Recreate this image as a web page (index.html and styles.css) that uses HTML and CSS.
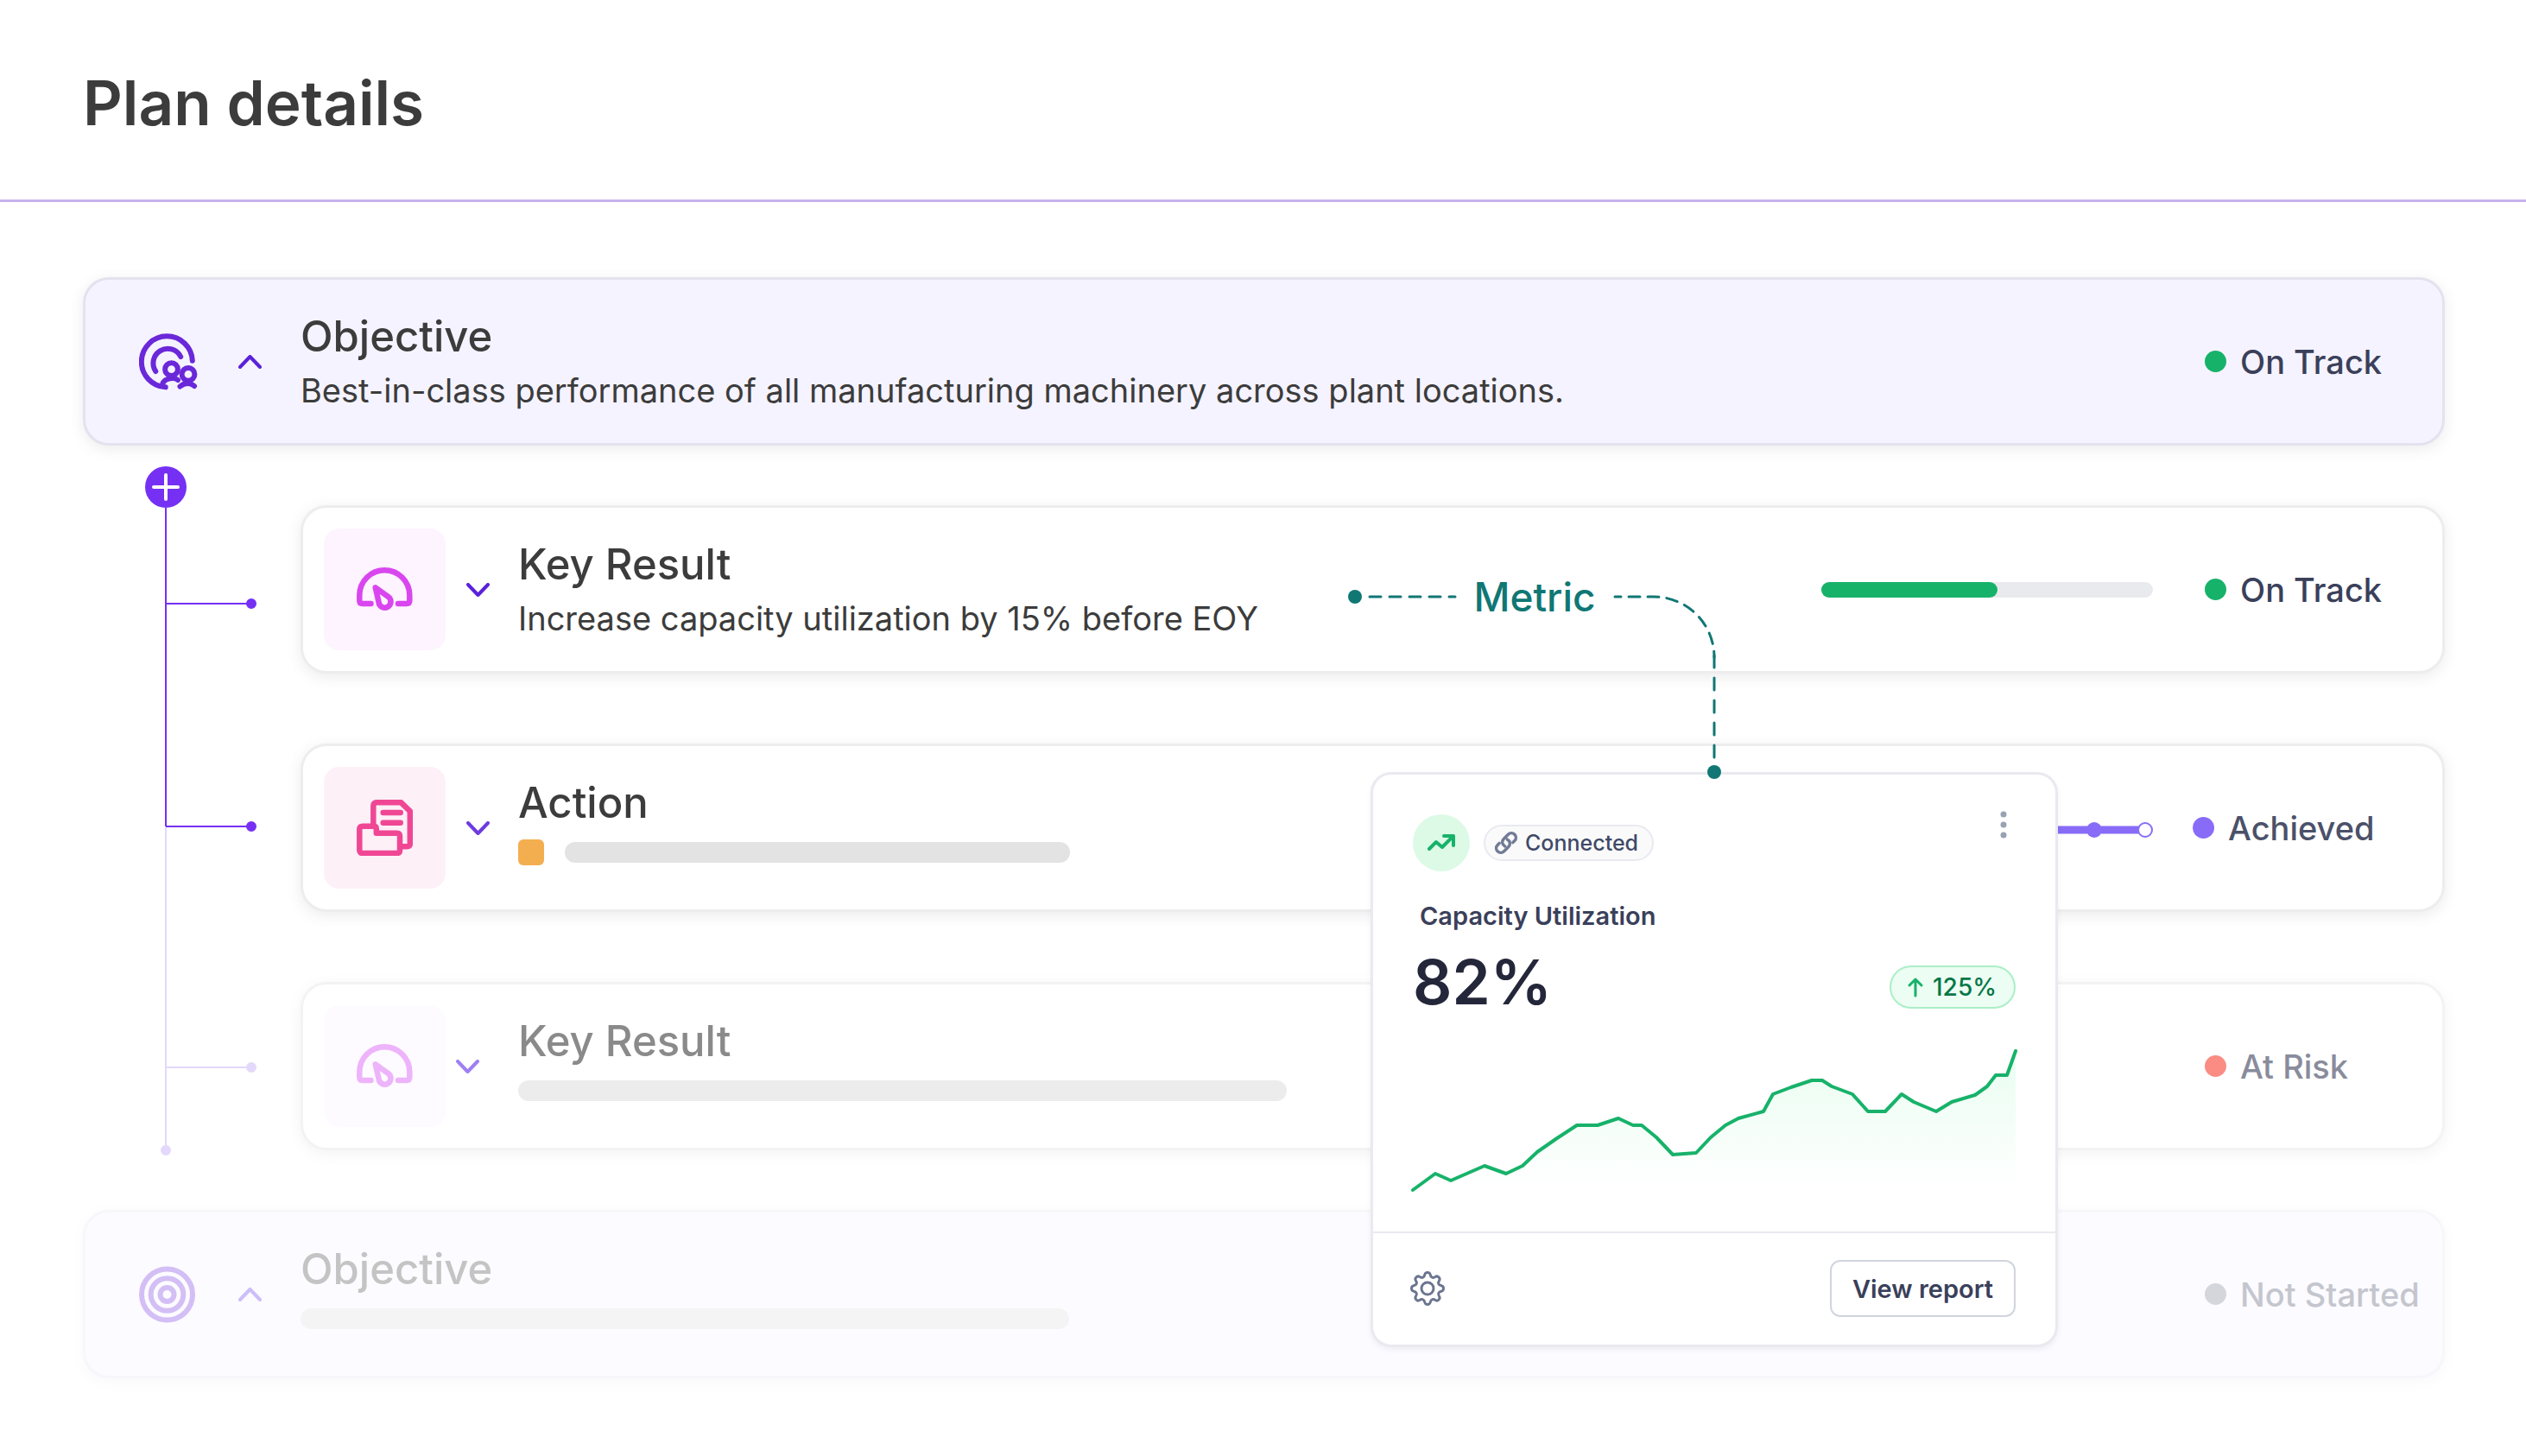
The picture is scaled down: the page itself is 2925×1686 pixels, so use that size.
FILE: index.html
```html
<!DOCTYPE html>
<html lang="en">
<head>
    <meta charset="UTF-8">
    <meta name="viewport" content="width=device-width, initial-scale=1.0">
    <title>Plan details</title>
    <link rel="stylesheet" href="styles.css">
</head>
<body>

<header class="page-header">
    <h1>Plan details</h1>
</header>

<main class="plan">

    <!-- Objective -->
    <article class="card objective">
        <svg class="icon" viewBox="0 0 68 66" fill="none" stroke="currentColor" stroke-width="6" stroke-linecap="round">
            <path d="M61.8 31.7A29.5 29.5 0 1 0 30.7 62.3"/>
            <path d="M48.2 27A16.8 16.8 0 1 0 19.3 44"/>
            <circle cx="37.5" cy="41.7" r="7.4"/>
            <circle cx="57" cy="47.4" r="7.4"/>
            <path d="M27.5 57.5C31 51.5 41 50.5 45 54"/>
            <path d="M47.5 61.5Q56 54.5 64 61"/>
        </svg>
        <button class="chevron" type="button" aria-label="Collapse objective">
            <svg viewBox="0 0 27 16"><path d="M2 14L13.500 2L25 14"/></svg>
        </button>
        <div class="info">
            <h2>Objective</h2>
            <p>Best-in-class performance of all manufacturing machinery across plant locations.</p>
        </div>
        <div class="status green">On Track</div>
    </article>

    <section class="children">
        <div class="tree">
            <button class="add" type="button" aria-label="Add item">
                <svg viewBox="0 0 48 48"><path d="M24 10V38M10 24H38"/></svg>
            </button>
            <svg class="branches" viewBox="0 0 252 760" fill="none" stroke-width="2">
                <g stroke="#7530f4">
                    <path d="M96 0V369M96 111H195M96 369H195"/>
                    <circle cx="195" cy="111" r="5" fill="#7530f4"/>
                    <circle cx="195" cy="369" r="5" fill="#7530f4"/>
                </g>
                <g stroke="#e4d8fc">
                    <path d="M96 370V744M96 648H195"/>
                    <circle cx="195" cy="648" r="5" fill="#e4d8fc"/>
                    <circle cx="96" cy="744" r="5" fill="#e4d8fc"/>
                </g>
            </svg>
        </div>

        <div class="rows">
            <!-- Key Result -->
            <article class="card">
                <div class="tile">
                    <svg viewBox="0 0 65 52">
                        <path d="M16.500 42H6.700Q3.300 42 3.300 38.500V32.300A29 29 0 0 1 61.300 32.300V38.500Q61.300 42 57.800 42H48"/>
                        <path d="M21.700 23.300L36 33.600A7 7 0 1 1 25.500 40Z"/>
                    </svg>
                </div>
                <button class="chevron" type="button" aria-label="Expand key result">
                    <svg viewBox="0 0 27 16"><path d="M2 2L13.500 14L25 2"/></svg>
                </button>
                <div class="info">
                    <h2>Key Result</h2>
                    <p>Increase capacity utilization by 15% before EOY</p>
                </div>
                <progress class="progress" value="53" max="100" aria-label="Progress"></progress>
                <div class="status green">On Track</div>
            </article>

            <!-- Action -->
            <article class="card action">
                <div class="tile">
                    <svg viewBox="0 0 65 65">
                        <path d="M19.300 29V7Q19.300 3.300 23 3.300H51.500L61.800 13.300V51Q61.800 54.300 58.500 54.300H52"/>
                        <path d="M30.700 15H50.700M30.700 26.700H50.700"/>
                        <path d="M3.300 34.700Q3.300 30.700 7 30.700H20Q22.800 30.700 22.800 33.500V38.700H46.500Q50 38.700 50 42V58.500Q50 62 46.500 62H7Q3.300 62 3.300 58.500Z"/>
                    </svg>
                </div>
                <button class="chevron" type="button" aria-label="Expand action">
                    <svg viewBox="0 0 27 16"><path d="M2 2L13.500 14L25 2"/></svg>
                </button>
                <div class="info">
                    <h2>Action</h2>
                    <div class="placeholder">
                        <span class="tag"></span>
                        <span class="bar short"></span>
                    </div>
                </div>
                <svg class="milestones" viewBox="0 0 384 24">
                    <path d="M9 14H375"/>
                    <circle cx="316" cy="14" r="9"/>
                    <circle class="open" cx="375" cy="14" r="8"/>
                </svg>
                <div class="status violet">Achieved</div>
            </article>

            <!-- Key Result, faded -->
            <article class="card faded">
                <div class="tile">
                    <svg viewBox="0 0 65 52">
                        <path d="M16.500 42H6.700Q3.300 42 3.300 38.500V32.300A29 29 0 0 1 61.300 32.300V38.500Q61.300 42 57.800 42H48"/>
                        <path d="M21.700 23.300L36 33.600A7 7 0 1 1 25.500 40Z"/>
                    </svg>
                </div>
                <button class="chevron" type="button" aria-label="Expand key result">
                    <svg viewBox="0 0 27 16"><path d="M2 2L13.500 14L25 2"/></svg>
                </button>
                <div class="info">
                    <h2>Key Result</h2>
                    <div class="placeholder"><span class="bar"></span></div>
                </div>
                <div class="status red">At Risk</div>
            </article>
        </div>

        <!-- Connector from the key result to its metric -->
        <div class="metric-link">
            <svg width="128" height="48" viewBox="0 0 128 48">
                <circle cx="8" cy="24" r="8"/>
                <path d="M25 24H124" stroke-dasharray="13 10"/>
            </svg>
            <span>Metric</span>
            <svg width="128" height="236" viewBox="0 0 128 236">
                <path d="M5 24H50A70 70 0 0 1 120 94" stroke-dasharray="13 9" stroke-dashoffset="6"/>
                <path d="M120 92V212" stroke-dasharray="14 12"/>
                <circle cx="120" cy="227" r="8"/>
            </svg>
        </div>

        <!-- Metric card -->
        <aside class="metric-card">
            <div class="metric-body">
                <div class="metric-top">
                    <div class="trend">
                        <svg width="32" height="20" viewBox="0 0 32 20"><path d="M2 17L10 9L17 15L29 3M19 2H30V13"/></svg>
                    </div>
                    <div class="connected">
                        <svg width="28" height="28" viewBox="0 0 24 24"><path d="M13.190 8.688a4.500 4.500 0 0 1 1.242 7.244l-4.500 4.500a4.500 4.500 0 0 1-6.364-6.364l1.757-1.757m13.350-.622 1.757-1.757a4.500 4.500 0 0 0-6.364-6.364l-4.500 4.500a4.500 4.500 0 0 0 1.242 7.244"/></svg>
                        Connected
                    </div>
                    <button class="menu" type="button" aria-label="More options">
                        <svg width="28" height="24" viewBox="0 0 28 24">
                            <circle cx="14" cy="0" r="3.500"/>
                            <circle cx="14" cy="12" r="3.500"/>
                            <circle cx="14" cy="24" r="3.500"/>
                        </svg>
                    </button>
                </div>
                <h3>Capacity Utilization</h3>
                <div class="metric-value">
                    <strong>82%</strong>
                    <span class="change">
                        <svg width="20" height="24" viewBox="0 0 20 24"><path d="M10 22V3M3 10L10 3L17 10"/></svg>
                        125%
                    </span>
                </div>
                <svg class="chart" viewBox="2 0 698 168">
                    <defs>
                        <linearGradient id="fade" x1="0" y1="0" x2="0" y2="1">
                            <stop offset="0" stop-color="#e9fdf1"/>
                            <stop offset="1" stop-color="#ffffff"/>
                        </linearGradient>
                    </defs>
                    <path fill="url(#fade)" d="M2 164L28 145L46 153L85 136L110 145L129 136L146 120L169 104L192 89H216L240 81L257 89H267L284 103L303 123L330 121L347 103L364 89L379 81L408 73L419 53L440 45L464 37H476L487 44L511 53L529 73H549L568 53L582 62L608 73L626 62L653 54L667 44L677 31H690L700 3V164Z"/>
                    <path class="line" d="M2 164L28 145L46 153L85 136L110 145L129 136L146 120L169 104L192 89H216L240 81L257 89H267L284 103L303 123L330 121L347 103L364 89L379 81L408 73L419 53L440 45L464 37H476L487 44L511 53L529 73H549L568 53L582 62L608 73L626 62L653 54L667 44L677 31H690L700 3"/>
                </svg>
            </div>
            <div class="metric-footer">
                <button class="settings" type="button" aria-label="Settings">
                    <svg width="42" height="42" viewBox="-21 -21 42 42">
                        <path d="M-3.200-16A3.300 3.300 0 0 1 3.200-16C3.600-12.800 6.500-11.600 9.050-13.570A3.300 3.300 0 0 1 13.570-9.050C11.600-6.500 12.800-3.600 16-3.200A3.300 3.300 0 0 1 16 3.200C12.800 3.600 11.600 6.500 13.570 9.050A3.300 3.300 0 0 1 9.050 13.570C6.500 11.600 3.600 12.800 3.200 16A3.300 3.300 0 0 1-3.200 16C-3.600 12.800-6.500 11.600-9.050 13.570A3.300 3.300 0 0 1-13.570 9.050C-11.600 6.500-12.800 3.600-16 3.200A3.300 3.300 0 0 1-16-3.200C-12.800-3.600-11.600-6.500-13.570-9.050A3.300 3.300 0 0 1-9.050-13.570C-6.500-11.600-3.600-12.800-3.200-16Z"/>
                        <circle r="7"/>
                    </svg>
                </button>
                <button class="report" type="button">View report</button>
            </div>
        </aside>
    </section>

    <!-- Objective, not started -->
    <article class="card objective muted">
        <svg class="icon" viewBox="0 0 68 66" fill="none" stroke="currentColor" stroke-width="6">
            <circle cx="32.500" cy="33" r="29.500"/>
            <circle cx="32.500" cy="33" r="18.800"/>
            <circle cx="32.500" cy="33" r="8"/>
        </svg>
        <button class="chevron" type="button" aria-label="Collapse objective">
            <svg viewBox="0 0 27 16"><path d="M2 14L13.500 2L25 14"/></svg>
        </button>
        <div class="info">
            <h2>Objective</h2>
            <div class="placeholder"><span class="bar"></span></div>
        </div>
        <div class="status grey">Not Started</div>
    </article>
</main>

</body>
</html>
```
FILE: styles.css
```css
/* General */
* {
    box-sizing: border-box;
}

body {
    font-family: Inter, "Liberation Sans", sans-serif;
    margin: 0;
    background-color: #fff;
    color: #3c3c3c;
}

h1, h2, h3, p {
    margin: 0;
}

svg {
    display: block;
    flex: none;
}

button {
    font-family: inherit;
    padding: 0;
    border: none;
    background: none;
    cursor: pointer;
}

.page-header {
    padding: 74px 96px 67px;
    border-bottom: 3px solid #c7b1ee;
}

.page-header h1 {
    font-size: 71px;
    line-height: 90px;
    font-weight: 600;
}

.plan {
    padding: 87px 94px 90px 96px;
}

/* Cards */
.card {
    display: flex;
    align-items: center;
    height: 195px;
    padding-left: 24px;
    border: 3px solid #ededed;
    border-radius: 30px;
    background-color: #fff;
    box-shadow: 0 4px 18px rgba(0, 0, 0, 0.08);
}

.objective {
    padding-left: 62px;
    background-color: #f5f3ff;
    border-color: #e4e2ee;
}

.icon {
    width: 68px;
    height: 66px;
    color: #6a28d9;
}

.tile {
    display: flex;
    flex: none;
    align-items: center;
    justify-content: center;
    width: 141px;
    height: 141px;
    border-radius: 18px;
    background-color: #fdf4ff;
    color: #d946ef;
}

.tile svg {
    width: 65px;
    fill: none;
    stroke: currentColor;
    stroke-width: 6.5;
    stroke-linecap: round;
    stroke-linejoin: round;
}

.chevron {
    flex: none;
    width: 27px;
    margin: 0 33px 0 24px;
    color: #5b21d9;
}

.objective .chevron {
    margin: 0 45px 0 47px;
}

.chevron svg {
    width: 27px;
    fill: none;
    stroke: currentColor;
    stroke-width: 4;
    stroke-linecap: round;
    stroke-linejoin: round;
}

.info {
    flex: 1;
}

.info h2 {
    font-size: 49px;
    line-height: 62px;
    font-weight: 500;
}

.info p {
    margin-top: 4px;
    font-size: 38px;
    line-height: 54px;
}

.placeholder {
    display: flex;
    align-items: center;
    gap: 24px;
    height: 44px;
    margin: 4px 0 10px;
}

.bar {
    width: 890px;
    height: 24px;
    border-radius: 12px;
    background-color: #e3e3e3;
}

.bar.short {
    width: 585px;
}

.tag {
    width: 30px;
    height: 30px;
    border-radius: 6px;
    background-color: #f3ae50;
}

/* Status */
.status {
    display: flex;
    flex: none;
    align-items: center;
    gap: 16px;
    width: 275px;
    margin-left: 60px;
    color: #3a405a;
    font-size: 38px;
    line-height: 48px;
    font-weight: 500;
    white-space: nowrap;
}

.status::before {
    content: "";
    width: 25px;
    height: 25px;
    border-radius: 50%;
    background-color: currentColor;
}

.green::before {
    background-color: #17b26a;
}

.violet {
    width: 289px;
    margin-left: 46px;
    color: #4b5169;
}

.violet::before {
    background-color: #886cf8;
}

.red {
    color: #898c9c;
}

.red::before {
    background-color: #fa8c84;
}

.grey {
    color: #c4c6ce;
}

.grey::before {
    background-color: #d5d6dc;
}

.progress {
    appearance: none;
    width: 384px;
    height: 18px;
    border: none;
}

.progress::-webkit-progress-bar {
    border-radius: 9px;
    background-color: #e9eaee;
}

.progress::-webkit-progress-value {
    border-radius: 9px;
    background-color: #17b26a;
}

.milestones {
    width: 384px;
    fill: #886cf8;
    stroke: #886cf8;
    stroke-width: 9;
}

.milestones circle {
    stroke-width: 0;
}

.milestones .open {
    fill: #fff;
    stroke-width: 2;
}

/* Row variants */
.action .tile {
    background-color: #fdf0f7;
    color: #f04795;
}

.action .chevron {
    color: #6d3be0;
}

.faded {
    border-color: #f3f3f3;
    box-shadow: 0 4px 18px rgba(0, 0, 0, 0.05);
}

.faded .tile {
    background-color: #fdfbff;
    color: #eeb4fb;
}

.faded .chevron {
    margin: 0 45px 0 12px;
    color: #9f80f1;
}

.faded h2 {
    color: #8a8a8a;
}

.faded .bar {
    background-color: #ececec;
}

.muted {
    background-color: #fcfbff;
    border-color: #f7f6fa;
    box-shadow: 0 4px 18px rgba(0, 0, 0, 0.03);
}

.muted .icon {
    color: #d3bff5;
}

.muted .chevron {
    color: #cdbdf9;
}

.muted h2 {
    color: #c4c4c4;
}

.muted .bar {
    background-color: #f4f4f5;
}

/* Child rows with the tree on the left */
.children {
    position: relative;
    display: grid;
    grid-template-columns: 252px 1fr;
}

.tree {
    padding-top: 24px;
}

.add {
    display: block;
    width: 48px;
    height: 48px;
    margin-left: 72px;
    border-radius: 50%;
    background-color: #7530f4;
}

.add svg {
    width: 48px;
    stroke: #fff;
    stroke-width: 4;
    stroke-linecap: round;
}

.branches {
    width: 252px;
}

.rows {
    display: flex;
    flex-direction: column;
    gap: 81px;
    padding: 69px 0;
}

/* Metric connector, lies over the rows */
.metric-link {
    position: absolute;
    z-index: 2;
    top: 151px;
    right: 838px;
    display: flex;
    justify-content: space-between;
    width: 432px;
    color: #107774;
    font-size: 46px;
    line-height: 48px;
    font-weight: 500;
    pointer-events: none;
}

.metric-link path {
    fill: none;
    stroke: currentColor;
    stroke-width: 3;
    stroke-linecap: round;
}

.metric-link circle {
    fill: currentColor;
}

/* Metric card */
.metric-card {
    position: absolute;
    z-index: 1;
    top: 378px;
    right: 448px;
    width: 796px;
    border: 3px solid #e9eaf0;
    border-radius: 24px;
    background-color: #fff;
    box-shadow: 0 3px 6px rgba(16, 24, 40, 0.06);
}

.metric-body {
    padding: 46px 46px 44px;
}

.metric-top {
    display: flex;
    align-items: center;
    gap: 16px;
}

.trend {
    display: flex;
    align-items: center;
    justify-content: center;
    width: 66px;
    height: 66px;
    border-radius: 50%;
    background-color: #dcfae6;
}

.trend svg {
    fill: none;
    stroke: #17b26a;
    stroke-width: 4;
    stroke-linecap: round;
    stroke-linejoin: round;
}

.connected {
    display: flex;
    align-items: center;
    gap: 8px;
    padding: 0 16px 0 10px;
    border: 2px solid #e9eaf0;
    border-radius: 21px;
    background-color: #fafafa;
    color: #404968;
    font-size: 25px;
    line-height: 38px;
    font-weight: 500;
}

.connected svg {
    fill: none;
    stroke: #717b96;
    stroke-width: 3;
    stroke-linecap: round;
}

.menu {
    align-self: flex-start;
    margin-left: auto;
}

.menu svg {
    overflow: visible;
    fill: #98a2b3;
}

.metric-card h3 {
    margin-top: 32px;
    padding-left: 8px;
    color: #3a405a;
    font-size: 29px;
    line-height: 40px;
    font-weight: 600;
}

.metric-value {
    display: flex;
    align-items: center;
    justify-content: space-between;
    margin: 11px 0 32px;
}

.metric-value strong {
    color: #24273a;
    font-size: 71px;
    line-height: 90px;
    font-weight: 600;
}

.change {
    display: flex;
    align-items: center;
    gap: 10px;
    margin-top: 12px;
    padding: 0 20px 0 18px;
    border: 2px solid #abefc6;
    border-radius: 25px;
    background-color: #ecfdf3;
    color: #067647;
    font-size: 28px;
    line-height: 46px;
    font-weight: 500;
}

.change svg {
    fill: none;
    stroke: #17b26a;
    stroke-width: 3;
    stroke-linecap: round;
    stroke-linejoin: round;
}

.chart {
    width: 100%;
    overflow: visible;
}

.chart .line {
    fill: none;
    stroke: #17b26a;
    stroke-width: 4;
    stroke-linecap: round;
    stroke-linejoin: round;
}

.metric-footer {
    display: flex;
    align-items: center;
    justify-content: space-between;
    padding: 31px 46px 32px 42px;
    border-top: 2px solid #e9eaf0;
}

.settings svg {
    fill: none;
    stroke: #6b7590;
    stroke-width: 3;
}

.report {
    height: 66px;
    padding: 0 24px;
    border: 2px solid #d0d5dd;
    border-radius: 12px;
    background-color: #fff;
    color: #3a405a;
    font-size: 29px;
    font-weight: 600;
}
```
